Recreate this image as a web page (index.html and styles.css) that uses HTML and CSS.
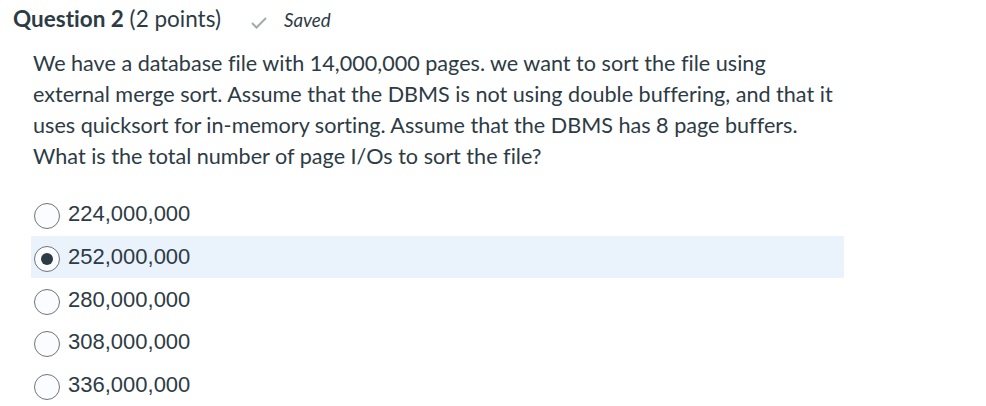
FILE: index.html
```html
<!DOCTYPE html>
<html>
<head>
<meta charset="utf-8">
<link rel="stylesheet" href="styles.css">
</head>
<body>
<div class="question">
  <div class="header">
    <span class="title"><b>Question 2</b> (2 points)</span>
    <svg class="check" width="16" height="12" viewBox="0 0 16 12"><path d="M1 6 L5.5 10.5 L15 1" fill="none" stroke="#a3aab0" stroke-width="2"/></svg>
    <i class="saved">Saved</i>
  </div>
  <div class="body">
    <p class="text">We have a database file with 14,000,000 pages. we want to sort the file using external merge sort. Assume that the DBMS is not using double buffering, and that it uses quicksort for in-memory sorting. Assume that the DBMS has 8 page buffers.<br>What is the total number of page I/Os to sort the file?</p>
    <div class="options">
      <div class="option"><span class="radio"></span><span class="label">224,000,000</span></div>
      <div class="option selected"><span class="radio checked"></span><span class="label">252,000,000</span></div>
      <div class="option"><span class="radio"></span><span class="label">280,000,000</span></div>
      <div class="option"><span class="radio"></span><span class="label">308,000,000</span></div>
      <div class="option"><span class="radio"></span><span class="label">336,000,000</span></div>
    </div>
  </div>
</div>
</body>
</html>
```
FILE: styles.css
```css
html, body {
  margin: 0;
  padding: 0;
  background: #fff;
}
body {
  font-family: Lato, "Noto Sans", sans-serif;
  color: #2d3b45;
  font-variant-ligatures: none;
}
.header {
  display: flex;
  align-items: baseline;
  box-sizing: border-box;
  height: 38px;
  padding: 5px 0 0 13px;
}
.title {
  font-size: 22.5px;
  line-height: 27px;
}
.title b {
  font-weight: 700;
}
.check {
  margin-left: 30px;
  margin-right: 17px;
  align-self: center;
  position: relative;
  top: 1px;
}
.saved {
  font-size: 18.8px;
  color: #2d3b45;
}
.body {
  padding-left: 31px;
}
.text {
  margin: 10px 0 0 2px;
  width: 811px;
  font-size: 21.6px;
  line-height: 31px;
}
.options {
  margin-top: 21px;
  width: 813px;
  display: flex;
  flex-direction: column;
  gap: 0.75px;
}
.option {
  display: flex;
  align-items: center;
  height: 42px;
  padding-left: 3px;
}
.option.selected {
  background: #eaf2fc;
}
.radio {
  box-sizing: border-box;
  width: 26px;
  height: 26px;
  border: 1px solid #6f7478;
  border-radius: 50%;
  background: #fbfcff;
  display: flex;
  align-items: center;
  justify-content: center;
  position: relative;
  top: 2px;
}
.radio.checked::after {
  content: "";
  width: 12px;
  height: 12px;
  border-radius: 50%;
  background: #2d3b45;
}
.label {
  margin-left: 8px;
  font-family: "Liberation Sans", Arial, sans-serif;
  font-size: 22px;
  color: #2d3b45;
}
```
